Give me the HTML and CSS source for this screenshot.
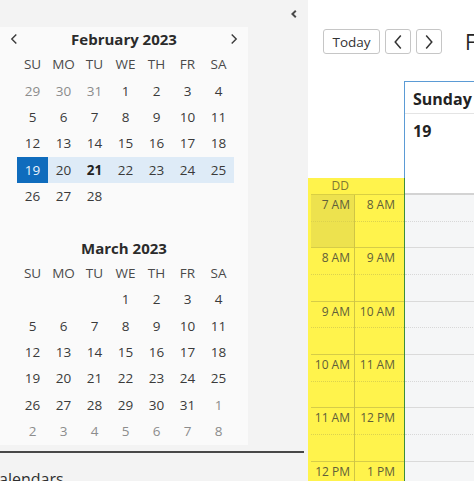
FILE: index.html
```html
<!DOCTYPE html>
<html>
<head>
<meta charset="utf-8">
<link rel="stylesheet" href="styles.css">
</head>
<body>
<div class="app">
  <aside class="sidebar">
    <div class="topbar">
      <span class="collapse"><svg width="6" height="8" viewBox="0 0 6 8"><path d="M4.8 0.8 L1.4 4 L4.8 7.2" fill="none" stroke="#4a4a4a" stroke-width="2"/></svg></span>
    </div>
    <div class="card">
      <section class="month">
        <div class="month-head">
          <span class="nav"><svg width="16" height="16" viewBox="0 0 16 16"><path d="M10.3 3.6 L5.8 8 L10.3 12.4" fill="none" stroke="#3a3a3a" stroke-width="1.4"/></svg></span>
          <span class="month-title">February 2023</span>
          <span class="nav"><svg width="16" height="16" viewBox="0 0 16 16"><path d="M5.7 3.6 L10.2 8 L5.7 12.4" fill="none" stroke="#3a3a3a" stroke-width="1.4"/></svg></span>
        </div>
        <div class="days">
          <span class="wd">SU</span><span class="wd">MO</span><span class="wd">TU</span><span class="wd">WE</span><span class="wd">TH</span><span class="wd">FR</span><span class="wd">SA</span>
          <span class="d out">29</span><span class="d out">30</span><span class="d out">31</span><span class="d">1</span><span class="d">2</span><span class="d">3</span><span class="d">4</span>
          <span class="d">5</span><span class="d">6</span><span class="d">7</span><span class="d">8</span><span class="d">9</span><span class="d">10</span><span class="d">11</span>
          <span class="d">12</span><span class="d">13</span><span class="d">14</span><span class="d">15</span><span class="d">16</span><span class="d">17</span><span class="d">18</span>
          <span class="d sel">19</span><span class="d wk">20</span><span class="d wk today">21</span><span class="d wk">22</span><span class="d wk">23</span><span class="d wk">24</span><span class="d wk">25</span>
          <span class="d">26</span><span class="d">27</span><span class="d">28</span><span class="d"></span><span class="d"></span><span class="d"></span><span class="d"></span>
        </div>
      </section>
      <section class="month">
        <div class="month-head center">
          <span class="month-title">March 2023</span>
        </div>
        <div class="days">
          <span class="wd">SU</span><span class="wd">MO</span><span class="wd">TU</span><span class="wd">WE</span><span class="wd">TH</span><span class="wd">FR</span><span class="wd">SA</span>
          <span class="d"></span><span class="d"></span><span class="d"></span><span class="d">1</span><span class="d">2</span><span class="d">3</span><span class="d">4</span>
          <span class="d">5</span><span class="d">6</span><span class="d">7</span><span class="d">8</span><span class="d">9</span><span class="d">10</span><span class="d">11</span>
          <span class="d">12</span><span class="d">13</span><span class="d">14</span><span class="d">15</span><span class="d">16</span><span class="d">17</span><span class="d">18</span>
          <span class="d">19</span><span class="d">20</span><span class="d">21</span><span class="d">22</span><span class="d">23</span><span class="d">24</span><span class="d">25</span>
          <span class="d">26</span><span class="d">27</span><span class="d">28</span><span class="d">29</span><span class="d">30</span><span class="d">31</span><span class="d out">1</span>
          <span class="d out">2</span><span class="d out">3</span><span class="d out">4</span><span class="d out">5</span><span class="d out">6</span><span class="d out">7</span><span class="d out">8</span>
        </div>
      </section>
    </div>
    <div class="divider"></div>
    <h2 class="cal-heading">Calendars</h2>
  </aside>

  <main class="main">
    <div class="toolbar">
      <button class="btn today-btn">Today</button>
      <button class="btn icon-btn"><svg width="10" height="16" viewBox="0 0 10 16"><path d="M7.8 1.5 L2.2 8 L7.8 14.5" fill="none" stroke="#333" stroke-width="1.5"/></svg></button>
      <button class="btn icon-btn"><svg width="10" height="16" viewBox="0 0 10 16"><path d="M2.2 1.5 L7.8 8 L2.2 14.5" fill="none" stroke="#333" stroke-width="1.5"/></svg></button>
      <span class="title">February 2023</span>
    </div>

    <div class="grid">
      <div class="gutter">
        <div class="gutter-spacer"></div>
        <div class="gutter-body">
          <div class="dd-row"><span class="dd">DD</span></div>
          <div class="slots">
            <div class="col col-a">
              <div class="slot current"><div class="half"><span class="lbl">7 AM</span></div><div class="half"></div></div>
              <div class="slot"><div class="half"><span class="lbl">8 AM</span></div><div class="half"></div></div>
              <div class="slot"><div class="half"><span class="lbl">9 AM</span></div><div class="half"></div></div>
              <div class="slot"><div class="half"><span class="lbl">10 AM</span></div><div class="half"></div></div>
              <div class="slot"><div class="half"><span class="lbl">11 AM</span></div><div class="half"></div></div>
              <div class="slot"><div class="half"><span class="lbl">12 PM</span></div><div class="half"></div></div>
            </div>
            <div class="col col-b">
              <div class="slot"><div class="half"><span class="lbl">8 AM</span></div><div class="half"></div></div>
              <div class="slot"><div class="half"><span class="lbl">9 AM</span></div><div class="half"></div></div>
              <div class="slot"><div class="half"><span class="lbl">10 AM</span></div><div class="half"></div></div>
              <div class="slot"><div class="half"><span class="lbl">11 AM</span></div><div class="half"></div></div>
              <div class="slot"><div class="half"><span class="lbl">12 PM</span></div><div class="half"></div></div>
              <div class="slot"><div class="half"><span class="lbl">1 PM</span></div><div class="half"></div></div>
            </div>
          </div>
        </div>
      </div>

      <div class="day">
        <div class="day-head">
          <div class="dow">Sunday</div>
          <div class="date">19</div>
        </div>
        <div class="day-body">
          <div class="slot"><div class="half"></div><div class="half"></div></div>
          <div class="slot"><div class="half"></div><div class="half"></div></div>
          <div class="slot"><div class="half"></div><div class="half"></div></div>
          <div class="slot"><div class="half"></div><div class="half"></div></div>
          <div class="slot"><div class="half"></div><div class="half"></div></div>
          <div class="slot"><div class="half"></div><div class="half"></div></div>
        </div>
      </div>
    </div>
  </main>
</div>
</body>
</html>
```

FILE: styles.css
```css
* { box-sizing: border-box; }

html, body {
  margin: 0;
  padding: 0;
}

body {
  width: 474px;
  height: 481px;
  overflow: hidden;
  font-family: "Open Sans", "Noto Sans", sans-serif;
  color: #323130;
  background: #fff;
}

.app {
  display: flex;
  height: 481px;
  overflow: hidden;
}

/* ---------- sidebar ---------- */
.sidebar {
  width: 308px;
  flex: none;
  background: #f3f3f3;
  display: flex;
  flex-direction: column;
  overflow: hidden;
}

.sidebar > * {
  flex-shrink: 0;
}

.topbar {
  height: 27px;
  display: flex;
  justify-content: flex-end;
  align-items: center;
  padding-right: 11px;
}

.collapse {
  display: flex;
  width: 6px;
  height: 8px;
}

.card {
  width: 248px;
  height: 418px;
  background: #fafafa;
}

.month-head {
  height: 24px;
  display: flex;
  align-items: center;
  justify-content: space-between;
  padding: 0 6px;
}

.month-head.center {
  justify-content: center;
}

.nav {
  width: 16px;
  height: 16px;
  display: flex;
}

.month-title {
  font-weight: 700;
  font-size: 15px;
  color: #2b2b2b;
}

.days {
  display: grid;
  grid-template-columns: repeat(7, 31px);
  grid-template-rows: repeat(7, 26.4px);
  margin-left: 17px;
}

.wd,
.d {
  display: flex;
  align-items: center;
  justify-content: center;
  font-size: 13.5px;
}

.wd {
  color: #4a4a4a;
}

.d {
  color: #3a3a3a;
}

.d.out {
  color: #8c8c8c;
}

.d.wk {
  background: #deebf7;
}

.d.sel {
  background: #0f6cbd;
  color: #eaf3fc;
}

.d.today {
  font-weight: 700;
  color: #222;
}

.divider {
  width: 304px;
  height: 2px;
  background: #474747;
  margin-top: 6px;
}

.cal-heading {
  margin: 15px 0 0 -11px;
  font-size: 16px;
  font-weight: 400;
  line-height: 22px;
  color: #2f2f2f;
  white-space: nowrap;
}

/* ---------- main ---------- */
.main {
  flex: 1;
  min-width: 0;
  overflow: hidden;
  background: #fff;
}

.toolbar {
  display: flex;
  align-items: center;
  gap: 5px;
  margin-top: 29px;
  padding-left: 15px;
  height: 25px;
  white-space: nowrap;
}

.btn {
  height: 25px;
  border: 1px solid #c6c6c6;
  border-radius: 3px;
  background: #fff;
  font-family: "Open Sans", "Noto Sans", sans-serif;
  font-size: 13.5px;
  color: #333;
  padding: 0;
  display: flex;
  align-items: center;
  justify-content: center;
  flex: none;
}

.today-btn {
  width: 57px;
}

.icon-btn {
  width: 26px;
}

.title {
  margin-left: 18px;
  font-size: 21px;
  color: #242424;
  flex: none;
}

.grid {
  display: flex;
  margin-top: 27px;
}

.gutter {
  width: 97px;
  flex: none;
}

.gutter-spacer {
  height: 97px;
  border-right: 1px solid #5b9bd5;
}

.gutter-body {
  background: #fff34c;
  border-right: 1px solid #3c8d3c;
  padding-left: 3px;
}

.dd-row {
  height: 17px;
  border-bottom: 1px solid #d9cf43;
  display: flex;
}

.dd {
  width: 44px;
  text-align: right;
  padding-right: 6px;
  font-size: 12px;
  line-height: 16px;
  color: #7d7834;
}

.slots {
  display: flex;
}

.col-a {
  width: 44px;
  border-right: 1px solid #cfc545;
}

.col-b {
  flex: 1;
}

.slot {
  height: 53.33px;
  display: flex;
  flex-direction: column;
}

.half {
  flex: 1;
}

.half:first-child {
  border-bottom: 1px dotted #dcd24e;
}

.half:last-child {
  border-bottom: 1px solid #d6cc48;
}

.slot.current {
  background: #ede24e;
}

.lbl {
  display: block;
  text-align: right;
  font-size: 12px;
  line-height: 16px;
  padding-top: 2px;
  color: #615e3a;
}

.col-a .lbl {
  padding-right: 4px;
}

.col-b .lbl {
  padding-right: 9px;
}

.day {
  width: 300px;
  flex: none;
}

.day-head {
  height: 114px;
  border-top: 1px solid #5b9bd5;
  border-bottom: 2px solid #d3d3d3;
  background: #fff;
}

.dow {
  height: 32px;
  border-bottom: 1px solid #e4e4e4;
  padding: 2px 0 0 8px;
  display: flex;
  align-items: center;
  font-weight: 700;
  font-size: 16px;
  color: #232323;
}

.date {
  padding: 6px 0 0 8px;
  font-weight: 700;
  font-size: 16px;
  line-height: 22px;
  color: #232323;
}

.day-body {
  background: #f5f6f7;
}

.day-body .half:first-child {
  border-bottom: 1px dotted #d8d8d8;
}

.day-body .half:last-child {
  border-bottom: 1px solid #dadada;
}
```
